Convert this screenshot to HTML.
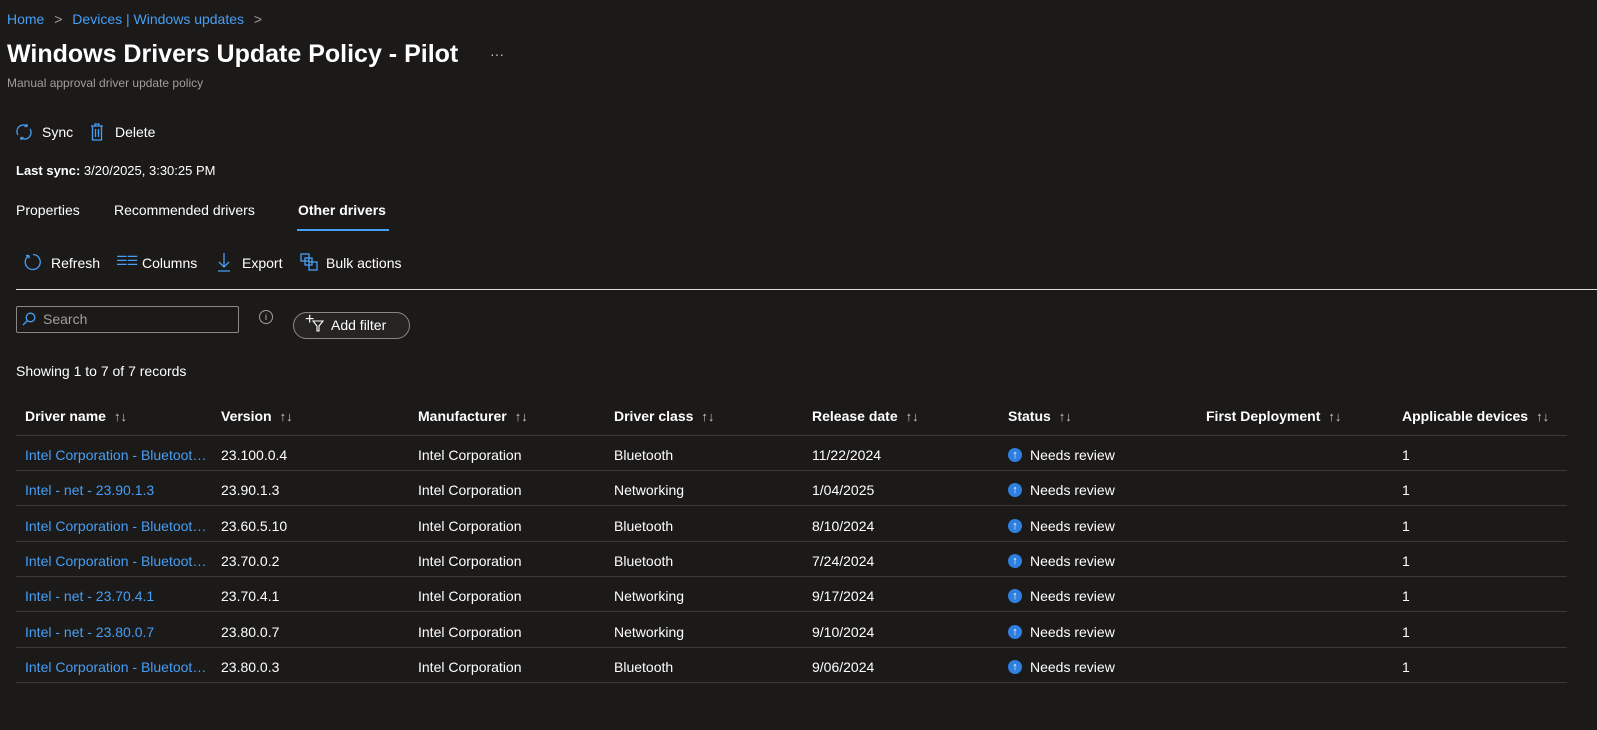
<!DOCTYPE html>
<html><head><meta charset="utf-8"><style>
*{margin:0;padding:0;box-sizing:border-box}
body{width:1597px;height:730px;background:#1b1a19;color:#fff;font-family:"Liberation Sans",sans-serif;font-size:14px;position:relative;overflow:hidden}
.a{position:absolute;white-space:nowrap}
.blue{color:#479ef5}
.b{font-weight:bold}
.hl{position:absolute;left:16px;width:1551px;height:1px;background:#3b3a39}
.sort{color:#c8c6c4;font-weight:normal;margin-left:8px;font-size:13px}
</style></head><body>
<div class="a blue" style="left:7px;top:11px;font-size:14px">Home <span style="color:#a19f9d;margin:0 6px">&gt;</span> Devices | Windows updates <span style="color:#a19f9d;margin-left:6px">&gt;</span></div>
<div class="a b" style="left:7px;top:40px;font-size:25px">Windows Drivers Update Policy - Pilot</div>
<div class="a" style="left:490px;top:46px;color:#c8c6c4">···</div>
<div class="a" style="left:7px;top:76px;font-size:12px;color:#a19f9d">Manual approval driver update policy</div>

<svg class="a" style="left:15px;top:123px" width="18" height="18" viewBox="0 0 18 18" fill="none" stroke="#479ef5" stroke-width="1.3"><path d="M3 12A6.5 6.5 0 0 1 12 3M15 6a6.5 6.5 0 0 1-9 9M12 1v2.5H9.5M6 17v-2.5h2.5"/></svg>
<div class="a" style="left:42px;top:124px">Sync</div>
<svg class="a" style="left:90px;top:123px" width="14" height="18" viewBox="0 0 14 18" fill="none" stroke="#479ef5" stroke-width="1.3"><path d="M1 3h12M5 3V1h4v2M2.5 3v14h9V3M5.5 6v8M8.5 6v8"/></svg>
<div class="a" style="left:115px;top:124px">Delete</div>
<div class="a" style="left:16px;top:163px;font-size:13px"><b>Last sync:</b> 3/20/2025, 3:30:25 PM</div>

<div class="a" style="left:16px;top:202px">Properties</div>
<div class="a" style="left:114px;top:202px">Recommended drivers</div>
<div class="a b" style="left:298px;top:202px">Other drivers</div>
<div class="a" style="left:297px;top:229px;width:92px;height:2px;background:#479ef5"></div>

<svg class="a" style="left:24px;top:253px" width="18" height="18" viewBox="0 0 18 18" fill="none" stroke="#479ef5" stroke-width="1.3"><path d="M5 2.5A7.5 7.5 0 1 0 9 1.5M5 2.5V5.5M5 2.5H2"/></svg>
<div class="a" style="left:51px;top:255px">Refresh</div>
<div class="a" style="left:116px;top:253px;color:#479ef5;font-size:13px;letter-spacing:-1px">☰☰</div>
<div class="a" style="left:142px;top:255px">Columns</div>
<svg class="a" style="left:217px;top:252px" width="14" height="20" viewBox="0 0 14 20" fill="none" stroke="#479ef5" stroke-width="1.3"><path d="M7 1v14M2 10l5 5 5-5M1 19h12"/></svg>
<div class="a" style="left:242px;top:255px">Export</div>
<svg class="a" style="left:300px;top:253px" width="18" height="18" viewBox="0 0 18 18" fill="none" stroke="#479ef5" stroke-width="1.3"><rect x="1" y="1" width="8" height="7"/><rect x="5" y="5" width="7" height="7"/><rect x="9" y="9" width="8" height="8"/></svg>
<div class="a" style="left:326px;top:255px">Bulk actions</div>

<div class="a" style="left:16px;top:289px;width:1581px;height:1px;background:#e1dfdd"></div>

<div class="a" style="left:16px;top:306px;width:223px;height:27px;border:1px solid #8a8886;border-radius:2px"></div>
<svg class="a" style="left:22px;top:312px" width="14" height="14" viewBox="0 0 14 14" fill="none" stroke="#479ef5" stroke-width="1.3"><circle cx="8.5" cy="5.5" r="4.3"/><path d="M5.5 8.5L1 13"/></svg>
<div class="a" style="left:43px;top:311px;color:#a19f9d">Search</div>
<div class="a" style="left:259px;top:310px;width:14px;height:14px;border:1px solid #a19f9d;border-radius:50%;font-size:9px;color:#c8c6c4;text-align:center;line-height:12px">i</div>
<div class="a" style="left:293px;top:312px;width:117px;height:27px;border:1px solid #8a8886;border-radius:14px;background:#252423"></div>
<div class="a" style="left:305px;top:311px;font-size:16px">+</div>
<svg class="a" style="left:312px;top:320px" width="12" height="12" viewBox="0 0 12 12" fill="none" stroke="#fff" stroke-width="1.1"><path d="M1 1h10L7 6v5H5V6z"/></svg>
<div class="a" style="left:331px;top:317px">Add filter</div>

<div class="a" style="left:16px;top:363px">Showing 1 to 7 of 7 records</div>

<div class="a b" style="left:25px;top:408px">Driver name<span class="sort">↑↓</span></div>
<div class="a b" style="left:221px;top:408px">Version<span class="sort">↑↓</span></div>
<div class="a b" style="left:418px;top:408px">Manufacturer<span class="sort">↑↓</span></div>
<div class="a b" style="left:614px;top:408px">Driver class<span class="sort">↑↓</span></div>
<div class="a b" style="left:812px;top:408px">Release date<span class="sort">↑↓</span></div>
<div class="a b" style="left:1008px;top:408px">Status<span class="sort">↑↓</span></div>
<div class="a b" style="left:1206px;top:408px">First Deployment<span class="sort">↑↓</span></div>
<div class="a b" style="left:1402px;top:408px">Applicable devices<span class="sort">↑↓</span></div>
<div class="hl" style="top:435px"></div>

<div id="rows"></div>
<script>
var d=[["Intel Corporation - Bluetoot…","23.100.0.4","Bluetooth","11/22/2024"],["Intel - net - 23.90.1.3","23.90.1.3","Networking","1/04/2025"],["Intel Corporation - Bluetoot…","23.60.5.10","Bluetooth","8/10/2024"],["Intel Corporation - Bluetoot…","23.70.0.2","Bluetooth","7/24/2024"],["Intel - net - 23.70.4.1","23.70.4.1","Networking","9/17/2024"],["Intel - net - 23.80.0.7","23.80.0.7","Networking","9/10/2024"],["Intel Corporation - Bluetoot…","23.80.0.3","Bluetooth","9/06/2024"]];
var h="";d.forEach(function(r,i){var t=447+i*35.3,l=470+i*35.3;
h+='<div class="a blue" style="left:25px;top:'+t+'px">'+r[0]+'</div><div class="a" style="left:221px;top:'+t+'px">'+r[1]+'</div><div class="a" style="left:418px;top:'+t+'px">Intel Corporation</div><div class="a" style="left:614px;top:'+t+'px">'+r[2]+'</div><div class="a" style="left:812px;top:'+t+'px">'+r[3]+'</div><div class="a" style="left:1008px;top:'+(t+1)+'px;width:14px;height:14px;border-radius:50%;background:#2f7fe0;color:#fff;font-size:11px;font-weight:bold;text-align:center;line-height:14px">↑</div><div class="a" style="left:1030px;top:'+t+'px">Needs review</div><div class="a" style="left:1402px;top:'+t+'px">1</div><div class="hl" style="top:'+l+'px"></div>';});
document.getElementById("rows").innerHTML=h;
</script>
</body></html>
